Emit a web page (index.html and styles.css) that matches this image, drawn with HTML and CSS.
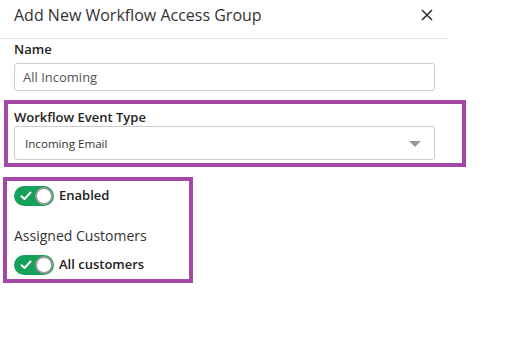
FILE: index.html
```html
<!DOCTYPE html>
<html>
<head>
<meta charset="utf-8">
<link rel="stylesheet" href="styles.css">
</head>
<body>
<div class="dialog">
  <div class="header">
    <div class="title">Add New Workflow Access Group</div>
    <div class="close">
      <svg width="12" height="12" viewBox="0 0 12 12"><path d="M1 1L11 11M11 1L1 11" stroke="#333" stroke-width="1.6" fill="none"/></svg>
    </div>
  </div>
  <div class="body">
    <div class="label">Name</div>
    <div class="input">All Incoming</div>
    <div class="box box-type">
      <div class="label">Workflow Event Type</div>
      <div class="select">
        <span>Incoming Email</span>
        <span class="caret"></span>
      </div>
    </div>
    <div class="box box-toggles">
      <div class="toggle-row">
        <span class="toggle"><svg class="check" width="12" height="10" viewBox="0 0 12 10"><path d="M1.5 5.2L4.5 8L10.5 1.5" stroke="#fff" stroke-width="2" fill="none" stroke-linecap="round" stroke-linejoin="round"/></svg><span class="knob"></span></span>
        <span class="toggle-label">Enabled</span>
      </div>
      <div class="section">Assigned Customers</div>
      <div class="toggle-row">
        <span class="toggle"><svg class="check" width="12" height="10" viewBox="0 0 12 10"><path d="M1.5 5.2L4.5 8L10.5 1.5" stroke="#fff" stroke-width="2" fill="none" stroke-linecap="round" stroke-linejoin="round"/></svg><span class="knob"></span></span>
        <span class="toggle-label">All customers</span>
      </div>
    </div>
  </div>
</div>
</body>
</html>
```
FILE: styles.css
```css
html, body {
  margin: 0;
  padding: 0;
  background: #fff;
}
body {
  font-family: "Open Sans", "Noto Sans", sans-serif;
  color: #222;
  width: 507px;
  height: 353px;
  overflow: hidden;
}
.dialog {
  width: 447px;
}
.header {
  height: 39px;
  border-bottom: 1px solid #e5e5e5;
  display: flex;
  align-items: center;
  justify-content: space-between;
  padding: 0 14px 0 14px;
  box-sizing: border-box;
}
.title {
  font-size: 16px;
  color: #333;
  margin-top: -9px;
}
.close {
  display: flex;
  margin-top: -8px;
}
.body {
  padding-left: 14px;
}
.label {
  font-size: 13px;
  font-weight: 600;
  color: #222;
  line-height: 18px;
  margin-top: 1px;
}
.input {
  margin-top: 5px;
  width: 421px;
  height: 28px;
  box-sizing: border-box;
  border: 1px solid #ccc;
  border-radius: 3px;
  padding-left: 8px;
  font-size: 13px;
  color: #555;
  display: flex;
  align-items: center;
}
.box {
  border: 4px solid #a349a4;
  box-sizing: border-box;
}
.box-type {
  margin-top: 9px;
  margin-left: -10px;
  width: 462px;
  height: 67px;
  padding: 4px 0 0 6px;
}
.box-type .label {
  margin-top: 0;
}
.select {
  margin-top: 0;
  width: 421px;
  height: 34px;
  box-sizing: border-box;
  border: 1px solid #ccc;
  border-radius: 3px;
  padding: 0 13px 0 10px;
  font-size: 11.6px;
  color: #333;
  display: flex;
  align-items: center;
  justify-content: space-between;
}
.caret {
  width: 0;
  height: 0;
  border-left: 6px solid transparent;
  border-right: 6px solid transparent;
  border-top: 6px solid #999;
  margin-top: 1px;
}
.box-toggles {
  margin-top: 10px;
  margin-left: -11px;
  width: 190px;
  height: 106px;
  padding: 5px 0 0 7px;
}
.toggle-row {
  display: flex;
  align-items: center;
  height: 20px;
}
.toggle-row .toggle-label {
  margin-top: -3px;
}
.toggle {
  position: relative;
  width: 40px;
  height: 20px;
  border-radius: 10px;
  background: #16a15a;
  display: inline-block;
  flex: none;
}
.check {
  position: absolute;
  left: 6px;
  top: 5px;
}
.knob {
  position: absolute;
  right: 1px;
  top: 1px;
  width: 14px;
  height: 14px;
  border-radius: 50%;
  background: #fff;
  border: 2px solid #9a9a9a;
}
.toggle-label {
  margin-left: 5px;
  font-size: 13px;
  font-weight: 600;
  color: #222;
}
.section {
  font-size: 14px;
  color: #333;
  margin-top: 20px;
  margin-bottom: 9px;
  line-height: 20px;
}
```
